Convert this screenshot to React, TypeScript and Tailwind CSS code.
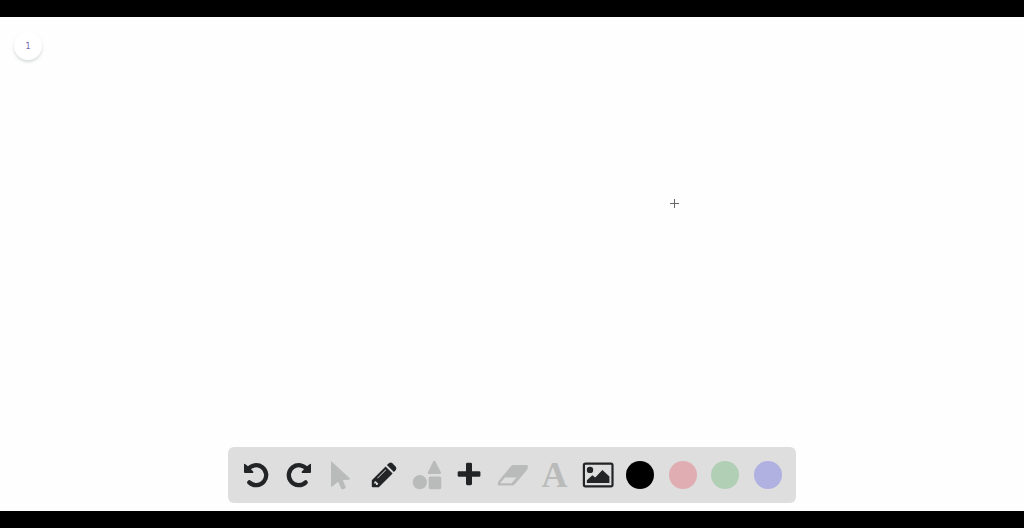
import { useState, type ReactNode } from 'react'

interface Tool {
  id: string
  label: string
  muted?: boolean
  icon: ReactNode
}

const iconClass = 'block w-8 h-8 overflow-visible'

const UndoIcon = () => (
  <svg className={iconClass} viewBox="0 0 32 32" fill="none" aria-hidden="true">
    <path d="M7.9 10.6A10 10 0 1 1 9.3 23.4" stroke="currentColor" strokeWidth="4.3" strokeLinecap="round" />
    <path d="M4 5.2Q4 4.2 5 5L8 7.2L13.2 12.5Q13.8 14 12.6 14H5Q4 14 4 13Z" fill="currentColor" />
  </svg>
)

const RedoIcon = () => (
  <svg className={iconClass} viewBox="0 0 32 32" fill="none" aria-hidden="true">
    <path d="M24.1 10.6A10 10 0 1 0 22.7 23.4" stroke="currentColor" strokeWidth="4.3" strokeLinecap="round" />
    <path d="M28 5.2Q28 4.2 27 5L24 7.2L18.8 12.5Q18.2 14 19.4 14H27Q28 14 28 13Z" fill="currentColor" />
  </svg>
)

const PointerIcon = () => (
  <svg className={iconClass} viewBox="0 0 32 32" fill="currentColor" aria-hidden="true">
    <path d="M6 2L25 19.6Q25.2 20.6 24 20.7L17.8 20.9L20.8 28.2Q20.9 28.9 20.2 29.2L17.4 30.4Q16.6 30.5 16.3 29.8L13.2 22.8L7.2 27.6Q6 28 6 27Z" />
  </svg>
)

const PencilIcon = () => (
  <svg className={iconClass} viewBox="0 0 32 32" fill="currentColor" aria-hidden="true">
    <path
      fillRule="evenodd"
      d="M3.8 21.2L17.6 7.4L24.6 14.4L10.8 28.2H4.6Q3.8 28.2 3.8 27.4ZM6.2 23.2V24.4H8V26H9.2L10.4 24.8L7.4 22ZM17.6 10.6L9.2 19L9.7 19.5L18.1 11.1Z"
    />
    <path d="M18.9 6.1L21 4.2Q22.7 3 24.3 4.2L27.8 7.7Q29 9.4 27.8 11.1L25.9 13.1Z" />
  </svg>
)

const ShapesIcon = () => (
  <svg className={iconClass} viewBox="0 0 32 32" fill="currentColor" aria-hidden="true">
    <path d="M22.3 2.3Q23.3 1 24.3 2.3L30 13.4Q30.4 14.8 29 14.9H17.6Q16.2 14.8 16.8 13.4Z" />
    <circle cx="8.8" cy="23.2" r="7.1" />
    <rect x="17.7" y="17.4" width="12.6" height="12.8" rx="1.6" />
  </svg>
)

const PlusIcon = () => (
  <svg className={iconClass} viewBox="0 0 32 32" fill="currentColor" aria-hidden="true">
    <rect x="4.7" y="12.2" width="22.7" height="5.6" rx="1.4" />
    <rect x="13" y="3.7" width="6" height="22.5" rx="1.4" />
  </svg>
)

const EraserIcon = () => (
  <svg className={iconClass} viewBox="0 0 32 32" fill="currentColor" aria-hidden="true">
    <path
      fillRule="evenodd"
      d="M17.4 6H30.6Q32.4 6.2 31.8 8L31.2 10.8L18.8 25.3Q17.6 26.6 16 26.6H3Q1.2 26.2 1.8 24.4L2.5 22.1L15 7.2Q16 6 17.4 6ZM8.9 18.4L4.2 24.2H15.6L20.4 18.4Z"
    />
  </svg>
)

const TextIcon = () => (
  <span className="block w-8 h-8 text-center text-[36px] leading-8 font-bold font-['Liberation_Serif',serif]">A</span>
)

const ImageIcon = () => (
  <svg className={iconClass} viewBox="0 0 32 32" fill="currentColor" aria-hidden="true">
    <rect x="2.9" y="4.7" width="28.6" height="22.6" rx="1.6" fill="none" stroke="currentColor" strokeWidth="2.2" />
    <circle cx="9" cy="10.9" r="3.2" />
    <path d="M5.9 24V21.3L11.4 16.3L14.2 18.6L21.4 11L28.4 17.6V24Z" />
  </svg>
)

const tools: Tool[] = [
  { id: 'undo', label: 'Undo', icon: <UndoIcon /> },
  { id: 'redo', label: 'Redo', icon: <RedoIcon /> },
  { id: 'pointer', label: 'Select', muted: true, icon: <PointerIcon /> },
  { id: 'pencil', label: 'Pencil', icon: <PencilIcon /> },
  { id: 'shapes', label: 'Shapes', muted: true, icon: <ShapesIcon /> },
  { id: 'add', label: 'Add', icon: <PlusIcon /> },
  { id: 'eraser', label: 'Eraser', muted: true, icon: <EraserIcon /> },
  { id: 'text', label: 'Text', muted: true, icon: <TextIcon /> },
  { id: 'image', label: 'Image', icon: <ImageIcon /> },
]

const colors = [
  { name: 'Black', className: 'bg-black' },
  { name: 'Red', className: 'bg-[#dfadb2]' },
  { name: 'Green', className: 'bg-[#b0cfb4]' },
  { name: 'Blue', className: 'bg-[#b0b0e1]' },
]

const App = () => {
  const [tool, setTool] = useState('pencil')
  const [color, setColor] = useState('Black')

  return (
    <div className="min-h-screen flex flex-col bg-black py-[17px]">
      <main className="relative flex-1 flex flex-col justify-between bg-[#fefefe] pt-[15px] pb-2">
        <button
          aria-label="Page 1"
          className="ml-3.5 w-7 h-7 pt-px rounded-full bg-white text-[8px] leading-none text-[#7466ac] font-['DejaVu_Sans',sans-serif] shadow-[0_2px_3px_rgba(0,50,45,0.16)]"
        >
          1
        </button>

        {/* drawing cursor */}
        <svg className="absolute left-[670px] top-[182px] w-[9px] h-[9px]" viewBox="0 0 9 9" aria-hidden="true">
          <path d="M4.5 0V9M0 4.5H9" stroke="#666" strokeWidth="1" />
        </svg>

        <div
          role="toolbar"
          aria-label="Whiteboard tools"
          className="self-center w-full max-w-[568px] h-14 px-3 flex items-center justify-between rounded-md bg-[#dedede]"
        >
          {tools.map((t) => (
            <button
              key={t.id}
              aria-label={t.label}
              aria-pressed={tool === t.id}
              onClick={() => setTool(t.id)}
              className={t.muted ? 'text-[#b9bbba]' : 'text-[#222426]'}
            >
              {t.icon}
            </button>
          ))}
          {colors.map((c) => (
            <button
              key={c.name}
              aria-label={c.name}
              aria-pressed={color === c.name}
              onClick={() => setColor(c.name)}
              className="w-8 h-8 flex items-center justify-center"
            >
              <span className={`w-7 h-7 rounded-full ${c.className}`} />
            </button>
          ))}
        </div>
      </main>
    </div>
  )
}

export default App
